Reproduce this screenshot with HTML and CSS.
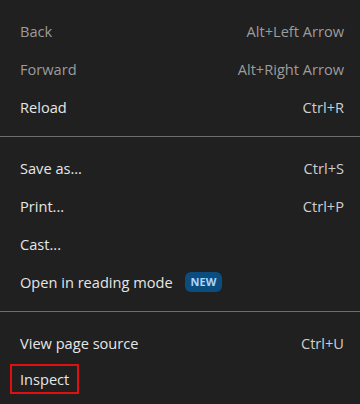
FILE: index.html
```html
<!DOCTYPE html>
<html lang="en">
<head>
    <meta charset="UTF-8">
    <meta name="viewport" content="width=device-width, initial-scale=1.0">
    <title>Context menu</title>
    <link rel="stylesheet" href="styles.css">
</head>
<body>
    <div class="menu">
        <div class="group">
            <div class="item disabled"><span class="label">Back</span><span class="key">Alt+Left Arrow</span></div>
            <div class="item disabled"><span class="label">Forward</span><span class="key">Alt+Right Arrow</span></div>
            <div class="item"><span class="label">Reload</span><span class="key">Ctrl+R</span></div>
        </div>
        <div class="sep"></div>
        <div class="group">
            <div class="item"><span class="label">Save as...</span><span class="key">Ctrl+S</span></div>
            <div class="item"><span class="label">Print...</span><span class="key">Ctrl+P</span></div>
            <div class="item"><span class="label">Cast...</span></div>
            <div class="item"><span class="label">Open in reading mode <span class="badge">NEW</span></span></div>
        </div>
        <div class="sep"></div>
        <div class="group">
            <div class="item"><span class="label">View page source</span><span class="key">Ctrl+U</span></div>
            <div class="item"><span class="label highlight">Inspect</span></div>
        </div>
    </div>
</body>
</html>
```

FILE: styles.css
```css
body { margin: 0; background-color: #202020; font-family: "Open Sans", "Noto Sans", Arial, sans-serif; font-size: 14.6px; color: #e6e6e6; }
.menu { width: 360px; height: 404px; overflow: hidden; }
.group { padding: 12px 0 10px; }
.item { display: flex; justify-content: space-between; align-items: center; height: 38px; padding: 0 16px 0 20px; }
.item.disabled { color: #9c9c9c; }
.key { color: #cfcfcf; }
.item.disabled .key { color: #9c9c9c; }
.label { display: flex; align-items: center; }
.badge { display: inline-block; margin-left: 12px; background-color: #0c4d80; color: #a9d6ff; font-weight: bold; font-size: 11px; line-height: 20px; height: 20px; padding: 0 6px; border-radius: 6px; }
.sep { height: 1px; background-color: #6e6e6e; }
.highlight { border: 2px solid #e01010; margin-left: -10px; margin-top: -4px; padding: 0 8px; line-height: 26px; }
```
